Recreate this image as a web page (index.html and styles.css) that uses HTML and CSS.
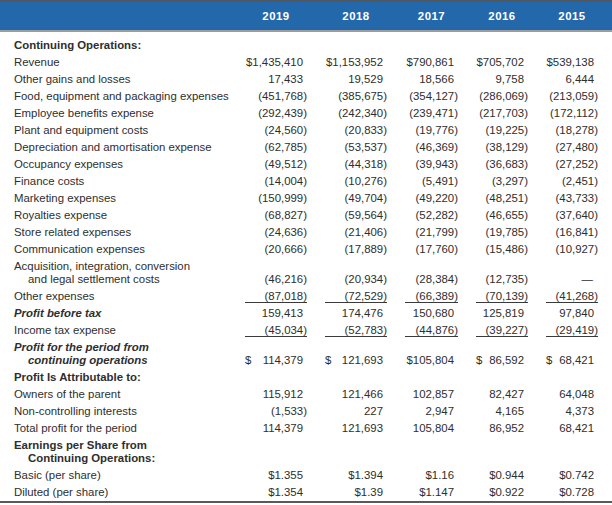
FILE: index.html
```html
<!DOCTYPE html>
<html lang="en">
<head>
<meta charset="utf-8">
<title>Income statement</title>
<link rel="stylesheet" href="styles.css">
</head>
<body>
<div class="sheet">
  <div class="band">
    <div class="row head">
      <div class="label"></div>
      <div class="yr">2019</div>
      <div class="yr">2018</div>
      <div class="yr">2017</div>
      <div class="yr">2016</div>
      <div class="yr">2015</div>
    </div>
  </div>

  <div class="body">
    <div class="row"><div class="label b">Continuing Operations:</div></div>
    <div class="row"><div class="label">Revenue</div><div class="v">$1,435,410</div><div class="v">$1,153,952</div><div class="v">$790,861</div><div class="v">$705,702</div><div class="v">$539,138</div></div>
    <div class="row"><div class="label">Other gains and losses</div><div class="v">17,433</div><div class="v">19,529</div><div class="v">18,566</div><div class="v">9,758</div><div class="v">6,444</div></div>
    <div class="row"><div class="label">Food, equipment and packaging expenses</div><div class="v n">(451,768)</div><div class="v n">(385,675)</div><div class="v n">(354,127)</div><div class="v n">(286,069)</div><div class="v n">(213,059)</div></div>
    <div class="row"><div class="label">Employee benefits expense</div><div class="v n">(292,439)</div><div class="v n">(242,340)</div><div class="v n">(239,471)</div><div class="v n">(217,703)</div><div class="v n">(172,112)</div></div>
    <div class="row"><div class="label">Plant and equipment costs</div><div class="v n">(24,560)</div><div class="v n">(20,833)</div><div class="v n">(19,776)</div><div class="v n">(19,225)</div><div class="v n">(18,278)</div></div>
    <div class="row"><div class="label">Depreciation and amortisation expense</div><div class="v n">(62,785)</div><div class="v n">(53,537)</div><div class="v n">(46,369)</div><div class="v n">(38,129)</div><div class="v n">(27,480)</div></div>
    <div class="row"><div class="label">Occupancy expenses</div><div class="v n">(49,512)</div><div class="v n">(44,318)</div><div class="v n">(39,943)</div><div class="v n">(36,683)</div><div class="v n">(27,252)</div></div>
    <div class="row"><div class="label">Finance costs</div><div class="v n">(14,004)</div><div class="v n">(10,276)</div><div class="v n">(5,491)</div><div class="v n">(3,297)</div><div class="v n">(2,451)</div></div>
    <div class="row"><div class="label">Marketing expenses</div><div class="v n">(150,999)</div><div class="v n">(49,704)</div><div class="v n">(49,220)</div><div class="v n">(48,251)</div><div class="v n">(43,733)</div></div>
    <div class="row"><div class="label">Royalties expense</div><div class="v n">(68,827)</div><div class="v n">(59,564)</div><div class="v n">(52,282)</div><div class="v n">(46,655)</div><div class="v n">(37,640)</div></div>
    <div class="row"><div class="label">Store related expenses</div><div class="v n">(24,636)</div><div class="v n">(21,406)</div><div class="v n">(21,799)</div><div class="v n">(19,785)</div><div class="v n">(16,841)</div></div>
    <div class="row"><div class="label">Communication expenses</div><div class="v n">(20,666)</div><div class="v n">(17,889)</div><div class="v n">(17,760)</div><div class="v n">(15,486)</div><div class="v n">(10,927)</div></div>
    <div class="row"><div class="label">Acquisition, integration, conversion<br>and legal settlement costs</div><div class="v n">(46,216)</div><div class="v n">(20,934)</div><div class="v n">(28,384)</div><div class="v n">(12,735)</div><div class="v dash">—</div></div>
    <div class="row"><div class="label">Other expenses</div><div class="v n u">(87,018)</div><div class="v n u">(72,529)</div><div class="v n u">(66,389)</div><div class="v n u">(70,139)</div><div class="v n u">(41,268)</div></div>
    <div class="row"><div class="label bi">Profit before tax</div><div class="v">159,413</div><div class="v">174,476</div><div class="v">150,680</div><div class="v">125,819</div><div class="v">97,840</div></div>
    <div class="row"><div class="label">Income tax expense</div><div class="v n u">(45,034)</div><div class="v n u">(52,783)</div><div class="v n u">(44,876)</div><div class="v n u">(39,227)</div><div class="v n u">(29,419)</div></div>
    <div class="row"><div class="label bi">Profit for the period from<br>continuing operations</div><div class="v split"><span>$</span><span>114,379</span></div><div class="v split"><span>$</span><span>121,693</span></div><div class="v">$105,804</div><div class="v split"><span>$</span><span>86,592</span></div><div class="v split"><span>$</span><span>68,421</span></div></div>
    <div class="row"><div class="label b">Profit Is Attributable to:</div></div>
    <div class="row"><div class="label">Owners of the parent</div><div class="v">115,912</div><div class="v">121,466</div><div class="v">102,857</div><div class="v">82,427</div><div class="v">64,048</div></div>
    <div class="row"><div class="label">Non-controlling interests</div><div class="v n">(1,533)</div><div class="v">227</div><div class="v">2,947</div><div class="v">4,165</div><div class="v">4,373</div></div>
    <div class="row"><div class="label">Total profit for the period</div><div class="v">114,379</div><div class="v">121,693</div><div class="v">105,804</div><div class="v">86,952</div><div class="v">68,421</div></div>
    <div class="row"><div class="label b">Earnings per Share from<br>Continuing Operations:</div></div>
    <div class="row"><div class="label">Basic (per share)</div><div class="v">$1.355</div><div class="v">$1.394</div><div class="v">$1.16</div><div class="v">$0.944</div><div class="v">$0.742</div></div>
    <div class="row"><div class="label">Diluted (per share)</div><div class="v">$1.354</div><div class="v">$1.39</div><div class="v">$1.147</div><div class="v">$0.922</div><div class="v">$0.728</div></div>
  </div>
</div>
</body>
</html>
```

FILE: styles.css
```css
html, body {
  margin: 0;
  padding: 0;
  background: #ffffff;
}

.sheet {
  width: 612px;
  font-family: "Liberation Sans", Arial, sans-serif;
  font-size: 11.4px;
  color: #2e2e2e;
}

.row {
  display: grid;
  grid-template-columns: 213px 62px 62px 53px 52px 52px;
  column-gap: 18px;
  padding: 2px 14px;
  line-height: 13px;
  align-items: end;
}

.band {
  margin-top: 0;
  border-top: 2px solid #505860;
  border-bottom: 2px solid #9c9c9c;
  background: #2368ab;
  height: 28px;
  display: flex;
  align-items: center;
}

.band .row {
  width: 100%;
  padding-top: 3px;
}

.yr {
  color: #ffffff;
  font-weight: 700;
  text-align: center;
  letter-spacing: 0.5px;
}

.body {
  padding-top: 5px;
  border-bottom: 2px solid #5a5a5a;
}

.label {
  padding-left: 14px;
  text-indent: -14px;
  white-space: nowrap;
}

.b {
  font-weight: 700;
}

.bi {
  font-weight: 700;
  font-style: italic;
}

.v {
  text-align: right;
  padding-right: 4px;
  white-space: nowrap;
}

.v.n {
  padding-right: 0;
}

.v.u {
  box-shadow: inset 0 -1px 0 #3a3a3a;
}

.v.split {
  display: flex;
  justify-content: space-between;
}

.v.dash {
  padding-right: 5px;
}
```
